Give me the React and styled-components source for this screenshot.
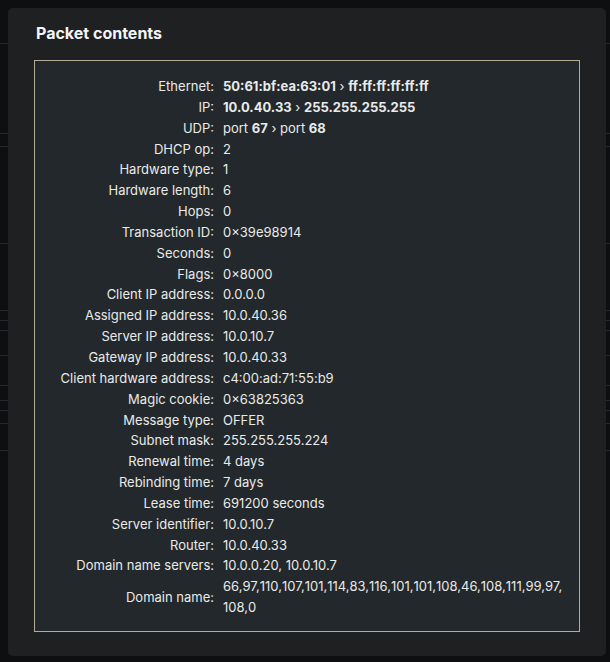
import React from "react";
import styled, { createGlobalStyle } from "styled-components";

// lets a long comma list wrap after a comma, as the original does
const commaList = (text) =>
  text.split(",").map((part, i, all) => (
    <React.Fragment key={i}>
      {part}
      {i < all.length - 1 && <>,<wbr /></>}
    </React.Fragment>
  ));

const rows = [
  ["Ethernet", <><b>50:61:bf:ea:63:01</b> › <b>ff:ff:ff:ff:ff:ff</b></>],
  ["IP", <><b>10.0.40.33</b> › <b>255.255.255.255</b></>],
  ["UDP", <>port <b>67</b> › port <b>68</b></>],
  ["DHCP op", "2"],
  ["Hardware type", "1"],
  ["Hardware length", "6"],
  ["Hops", "0"],
  ["Transaction ID", "0×39e98914"],
  ["Seconds", "0"],
  ["Flags", "0×8000"],
  ["Client IP address", "0.0.0.0"],
  ["Assigned IP address", "10.0.40.36"],
  ["Server IP address", "10.0.10.7"],
  ["Gateway IP address", "10.0.40.33"],
  ["Client hardware address", "c4:00:ad:71:55:b9"],
  ["Magic cookie", "0×63825363"],
  ["Message type", "OFFER"],
  ["Subnet mask", "255.255.255.224"],
  ["Renewal time", "4 days"],
  ["Rebinding time", "7 days"],
  ["Lease time", "691200 seconds"],
  ["Server identifier", "10.0.10.7"],
  ["Router", "10.0.40.33"],
  ["Domain name servers", "10.0.0.20, 10.0.10.7"],
  ["Domain name", commaList("66,97,110,107,101,114,83,116,101,101,108,46,108,111,99,97,108,0")],
];

// faint lines of the page behind the dialog
const pageLines = [43, 133, 146, 243, 310, 320, 330, 355, 385, 400, 410, 423, 450];

const App = () => {
  return (
    <>
      <GlobalStyle />
      <Page>
        {pageLines.map((y) => (
          <PageLine key={y} style={{ top: y }} />
        ))}
      </Page>
      <Overlay>
        <Modal>
          <Title>Packet contents</Title>
          <Contents>
            {rows.map(([label, value]) => (
              <React.Fragment key={label}>
                <Label>{label}:</Label>
                <Value>{value}</Value>
              </React.Fragment>
            ))}
          </Contents>
        </Modal>
      </Overlay>
    </>
  );
};

export default App;

const GlobalStyle = createGlobalStyle`
  html, body {
    margin: 0;
    padding: 0;
    background: #0e0f11;
    font-family: Inter, "Liberation Sans", sans-serif;
    color: #eaeaea;
  }
`;

const Page = styled.div`
  position: fixed;
  inset: 0;
  background: #0e0f11;
`;

const PageLine = styled.div`
  position: absolute;
  left: 0;
  right: 0;
  height: 1px;
  background: #25272a;
`;

const Overlay = styled.div`
  position: fixed;
  inset: 0;
  padding: 8px 4px 6px 8px;
  display: flex;
  align-items: flex-start;
`;

const Modal = styled.div`
  width: 598px;
  height: 648px;
  box-sizing: border-box;
  background: #1f2022;
  border-radius: 5px;
  padding: 13px 26px 26px 26px;
  display: flex;
  flex-direction: column;
`;

const Title = styled.h2`
  margin: 0 0 15px 2px;
  font-size: 16px;
  line-height: 24px;
  font-weight: 700;
  color: #f4f4f4;
`;

const Contents = styled.div`
  flex: 1;
  border: 1px solid #b8ab93;
  background: #22282b;
  padding: 15px 16px 13px 16px;
  display: grid;
  grid-template-columns: 163px 1fr;
  column-gap: 9px;
  align-content: start;
  font-size: 13px;
  line-height: 20.85px;
`;

const Label = styled.div`
  text-align: right;
  align-self: center;
  white-space: nowrap;
`;

const Value = styled.div`
  b {
    font-weight: 700;
  }
`;
